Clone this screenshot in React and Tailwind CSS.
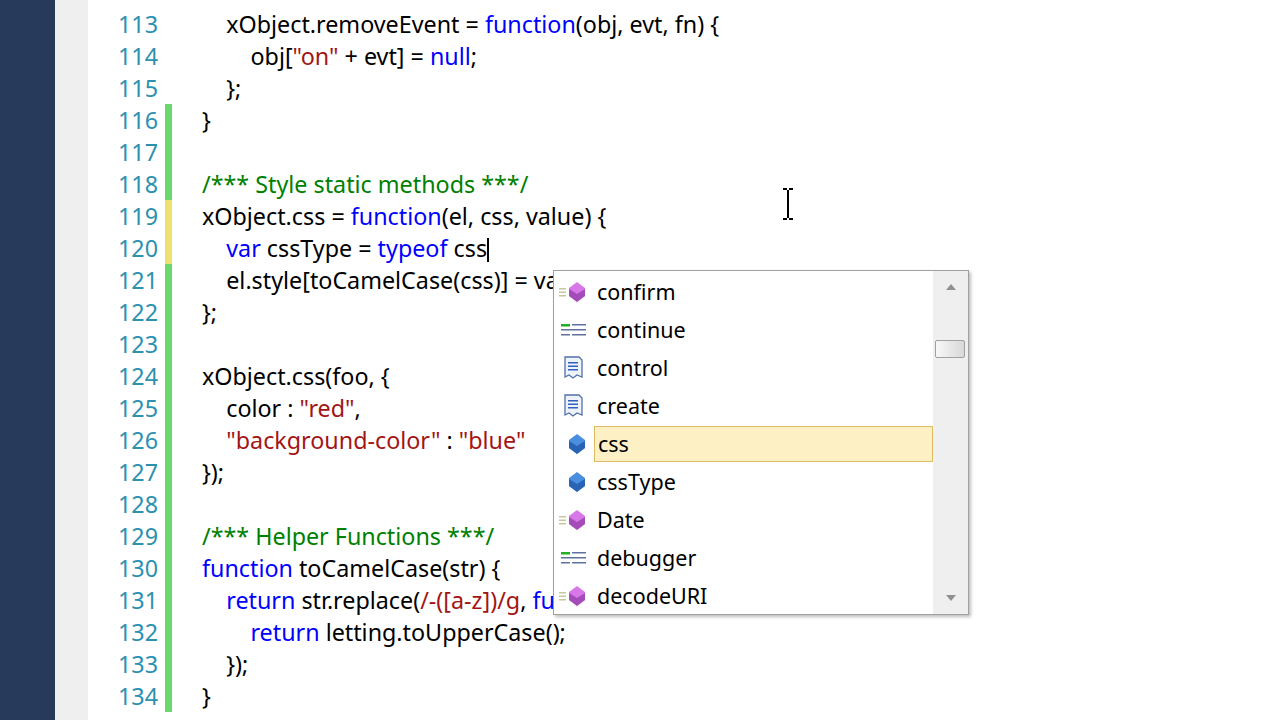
import React from "react";

const K = ({ c }) => <span className="text-[#0000ff]">{c}</span>;
const S = ({ c }) => <span className="text-[#a31515]">{c}</span>;
const C = ({ c }) => <span className="text-[#008000]">{c}</span>;

const lines = [
  [113, <>    xObject.removeEvent = <K c="function" />(obj, evt, fn) {"{"}</>, null],
  [114, <>        obj[<S c='"on"' /> + evt] = <K c="null" />;</>, null],
  [115, <>    {"};"}</>, null],
  [116, <>{"}"}</>, "g"],
  [117, <></>, "g"],
  [118, <C c="/*** Style static methods ***/" />, "g"],
  [119, <>xObject.css = <K c="function" />(el, css, value) {"{"}</>, "y"],
  [120, <>    <K c="var" /> cssType = <K c="typeof" /> css<span className="inline-block w-[2px] h-[24px] bg-black align-middle" /></>, "y"],
  [121, <>    el.style[toCamelCase(css)] = value;</>, "g"],
  [122, <>{"};"}</>, "g"],
  [123, <></>, "g"],
  [124, <>xObject.css(foo, {"{"}</>, "g"],
  [125, <>    color : <S c='"red"' />,</>, "g"],
  [126, <>    <S c='"background-color"' /> : <S c='"blue"' /></>, "g"],
  [127, <>{"});"}</>, "g"],
  [128, <></>, "g"],
  [129, <C c="/*** Helper Functions ***/" />, "g"],
  [130, <><K c="function" /> toCamelCase(str) {"{"}</>, "g"],
  [131, <>    <K c="return" /> str.replace(<S c="/-([a-z])/g" />, <K c="function" />(match, letter) {"{"}</>, "g"],
  [132, <>        <K c="return" /> letting.toUpperCase();</>, "g"],
  [133, <>    {"});"}</>, "g"],
  [134, <>{"}"}</>, "g"],
];

const Diamond = ({ color, dark, lines: l }) => (
  <svg width="30" height="24" viewBox="0 0 30 24">
    {l && (<><rect x="0" y="8" width="7" height="1.5" fill="#c8c8a0" /><rect x="0" y="11.5" width="7" height="1.5" fill="#c8c8a0" /><rect x="0" y="15" width="7" height="1.5" fill="#c8c8a0" /></>)}
    <polygon points="18,2 26,8 26,16 18,22 10,16 10,8" fill={color} />
    <polygon points="18,22 26,16 26,9 18,14 10,9 10,16" fill={dark} opacity="0.55" />
  </svg>
);
const Keyword = () => (
  <svg width="30" height="22" viewBox="0 0 30 22">
    <rect x="2" y="5" width="9" height="2.5" fill="#20b020" />
    <rect x="13" y="5" width="14" height="1.5" fill="#6070a0" />
    <rect x="2" y="10" width="25" height="1.5" fill="#6070a0" />
    <rect x="2" y="15" width="9" height="1.5" fill="#6070a0" />
    <rect x="13" y="15" width="14" height="1.5" fill="#6070a0" />
  </svg>
);
const Doc = () => (
  <svg width="30" height="24" viewBox="0 0 30 24">
    <path d="M6 1 H20 L23 4 V21 L18 19 L14 22 L10 19 L6 21 Z" fill="#eef3fb" stroke="#5070a8" strokeWidth="1.3" />
    <rect x="9" y="6" width="10" height="1.5" fill="#3060c0" />
    <rect x="9" y="9.5" width="10" height="1.5" fill="#3060c0" />
    <rect x="9" y="13" width="10" height="1.5" fill="#3060c0" />
  </svg>
);
const Blue = () => <Diamond color="#4a8ee0" dark="#0d3f90" />;
const Purple = () => <Diamond color="#d878e8" dark="#7a2a90" lines />;

const items = [
  ["confirm", Purple], ["continue", Keyword], ["control", Doc], ["create", Doc],
  ["css", Blue, true], ["cssType", Blue], ["Date", Purple], ["debugger", Keyword], ["decodeURI", Purple],
];

export default function App() {
  return (
    <div className="w-[1280px] h-[720px] flex bg-white overflow-hidden relative">
      <div className="w-[55px] bg-[#283a5c]" />
      <div className="w-[33px] bg-[#efefef]" />
      <div className="flex-1 pt-[8px] font-['Liberation_Mono'] text-[23.3px] text-black">
        {lines.map(([n, code, bar]) => (
          <div key={n} className="flex h-[32px] items-center">
            <div className="w-[70px] text-right text-[#2b91af]">{n}</div>
            <div className="w-[7px]" />
            <div className={`w-[7px] h-[32px] ${bar === "g" ? "bg-[#6bd86b]" : bar === "y" ? "bg-[#f0e070]" : ""}`} />
            <div className="w-[30px]" />
            <div className="whitespace-pre">{code}</div>
          </div>
        ))}
      </div>

      <svg className="absolute left-[780px] top-[187px]" width="16" height="34" viewBox="0 0 16 34">
        <path d="M3 2 H7 M9 2 H13 M8 3 V31 M3 32 H7 M9 32 H13" stroke="#000" strokeWidth="2" fill="none" />
      </svg>

      <div className="absolute left-[553px] top-[270px] w-[416px] h-[345px] bg-white border border-[#a0a0a0] shadow-[2px_2px_3px_rgba(0,0,0,0.25)] flex">
        <div className="flex-1 pt-[2px] font-['Open_Sans'] text-[21.5px] text-black">
          {items.map(([t, Icon, sel]) => (
            <div key={t} className="flex items-center h-[38px]">
              <div className="w-[40px] flex justify-center"><Icon /></div>
              <div className={`flex-1 h-[36px] flex items-center pl-[3px] ${sel ? "bg-[#fdf0c4] border border-[#e0bc60]" : ""}`}>{t}</div>
            </div>
          ))}
        </div>
        <div className="w-[35px] bg-[#efefef] relative">
          <div className="absolute left-[13px] top-[13px] w-0 h-0 border-l-[5px] border-r-[5px] border-b-[6px] border-l-transparent border-r-transparent border-b-[#909090]" />
          <div className="absolute left-[2px] top-[69px] w-[30px] h-[18px] bg-gradient-to-r from-[#f8f8f8] to-[#d8d8d8] border border-[#a0a0a0] rounded-[2px]" />
          <div className="absolute left-[13px] bottom-[13px] w-0 h-0 border-l-[5px] border-r-[5px] border-t-[6px] border-l-transparent border-r-transparent border-t-[#909090]" />
        </div>
      </div>
    </div>
  );
}
